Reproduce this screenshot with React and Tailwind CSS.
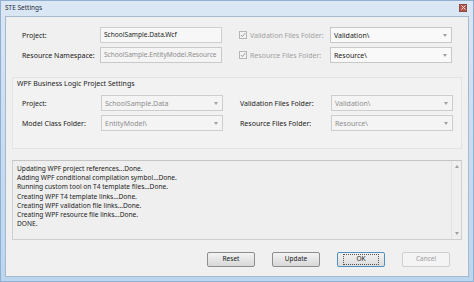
import React from "react";

const font = { fontFamily: '"Noto Sans", "Open Sans", sans-serif' };

function TextBox({ value, disabled }) {
  return (
    <div
      className={
        "w-[122px] h-[16px] flex items-center px-[3px] border text-[6.6px] leading-none whitespace-nowrap overflow-hidden " +
        (disabled
          ? "bg-[#f4f4f4] border-[#c9c9c9] text-[#8d8d8d]"
          : "bg-[#f7f7f7] border-[#cfcfcf] text-[#1a1a1a]")
      }
    >
      {value}
    </div>
  );
}

function Combo({ value, disabled }) {
  return (
    <div
      className={
        "w-[122px] h-[16px] flex items-center justify-between pl-[3px] pr-[4px] border text-[7px] leading-none " +
        (disabled
          ? "bg-[#f4f4f4] border-[#cdcdcd] text-[#8d8d8d]"
          : "bg-[#f9f9f9] border-[#c8c8c8] text-[#1a1a1a]")
      }
    >
      <span>{value}</span>
      <svg width="4" height="3" viewBox="0 0 4 3">
        <path d="M0 0 L4 0 L2 3 Z" fill="#a0a0a0" />
      </svg>
    </div>
  );
}

function Check() {
  return (
    <div className="w-[8px] h-[8px] border border-[#b5b5b5] bg-[#f3f3f3] flex items-center justify-center">
      <svg width="6" height="6" viewBox="0 0 6 6">
        <path d="M0.8 3 L2.4 4.6 L5.2 1.2" stroke="#9a9a9a" strokeWidth="1" fill="none" />
      </svg>
    </div>
  );
}

function Button({ children, kind }) {
  let cls =
    "w-[48px] h-[15px] flex items-center justify-center text-[6.5px] leading-none border rounded-[2px] ";
  if (kind === "ok")
    cls += "border-[#4f8fc4] bg-gradient-to-b from-[#f2f2f2] to-[#dcdcdc] text-[#1a1a1a]";
  else if (kind === "disabled")
    cls += "border-[#cfcfcf] bg-[#f4f4f4] text-[#9a9a9a]";
  else cls += "border-[#8e8e8e] bg-gradient-to-b from-[#f3f3f3] to-[#d8d8d8] text-[#1a1a1a]";
  return (
    <div className={cls}>
      {kind === "ok" ? (
        <span className="px-[12px] py-[1px] border border-dotted border-[#555]">{children}</span>
      ) : (
        children
      )}
    </div>
  );
}

export default function App() {
  const log = [
    "Updating WPF project references...Done.",
    "Adding WPF conditional compilation symbol...Done.",
    "Running custom tool on T4 template files...Done.",
    "Creating WPF T4 template links...Done.",
    "Creating WPF validation file links...Done.",
    "Creating WPF resource file links...Done.",
    "DONE.",
  ];
  return (
    <div
      className="w-[474px] h-[282px] flex flex-col bg-gradient-to-b from-[#dbe7f4] via-[#c9dcf1] to-[#bcd6f0] border border-[#8fb0d3] overflow-hidden"
      style={font}
    >
      {/* title bar */}
      <div className="h-[15px] flex items-center justify-between pl-[4px] pr-[6px] shrink-0">
        <span className="text-[6.5px] text-[#1e2a3a] leading-none">STE Settings</span>
        <div className="w-[8px] h-[8px] bg-[#b9554c] border border-[#8a4a45] flex items-center justify-center mt-[-2px]">
          <svg width="5" height="5" viewBox="0 0 5 5">
            <path d="M0.5 0.5 L4.5 4.5 M4.5 0.5 L0.5 4.5" stroke="#f3e4e2" strokeWidth="1" />
          </svg>
        </div>
      </div>
      {/* client */}
      <div className="mx-[4px] mb-[4px] flex-1 bg-[#f0f0f0] border border-[#a6b9cf] flex flex-col text-[#1a1a1a]">
        {/* top section */}
        <div className="flex pl-[16px] pt-[10px]">
          <div className="flex flex-col gap-[4px]">
            <div className="flex items-center">
              <span className="w-[78px] text-[7px] leading-none">Project:</span>
              <TextBox value="SchoolSample.Data.Wcf" />
            </div>
            <div className="flex items-center">
              <span className="w-[78px] text-[7px] leading-none">Resource Namespace:</span>
              <TextBox value="SchoolSample.EntityModel.Resource" disabled />
            </div>
          </div>
          <div className="flex flex-col gap-[4px] ml-[17px]">
            <div className="flex items-center">
              <div className="w-[91px] flex items-center gap-[3px]">
                <Check />
                <span className="text-[7px] leading-none text-[#a0a0a0]">Validation Files Folder:</span>
              </div>
              <Combo value="Validation\" />
            </div>
            <div className="flex items-center">
              <div className="w-[91px] flex items-center gap-[3px]">
                <Check />
                <span className="text-[7px] leading-none text-[#a0a0a0]">Resource Files Folder:</span>
              </div>
              <Combo value="Resource\" />
            </div>
          </div>
        </div>

        {/* group */}
        <div className="mx-[6px] mt-[14px] h-[72px] border border-[#e3e3e3] bg-[#f2f2f2] flex flex-col">
          <div className="pl-[4px] pt-[1px] text-[7px] leading-[10px]">WPF Business Logic Project Settings</div>
          <div className="flex pl-[9px] pt-[6px]">
            <div className="flex flex-col gap-[4px]">
              <div className="flex items-center">
                <span className="w-[79px] text-[7px] leading-none">Project:</span>
                <Combo value="SchoolSample.Data" disabled />
              </div>
              <div className="flex items-center">
                <span className="w-[79px] text-[7px] leading-none">Model Class Folder:</span>
                <Combo value="EntityModel\" disabled />
              </div>
            </div>
            <div className="flex flex-col gap-[4px] ml-[17px]">
              <div className="flex items-center">
                <span className="w-[91px] text-[7px] leading-none">Validation Files Folder:</span>
                <Combo value="Validation\" disabled />
              </div>
              <div className="flex items-center">
                <span className="w-[91px] text-[7px] leading-none">Resource Files Folder:</span>
                <Combo value="Resource\" disabled />
              </div>
            </div>
          </div>
        </div>

        {/* log */}
        <div className="mx-[6px] mt-[11px] h-[80px] border border-[#cfcfcf] border-t-[#c4c4c4] bg-[#efefef] flex">
          <div className="flex-1 pl-[4px] pt-[3px] text-[6.6px] leading-[9.2px]">
            {log.map((l) => (
              <div key={l}>{l}</div>
            ))}
          </div>
          <div className="w-[10px] border-l border-[#e4e4e4] flex flex-col items-center justify-between py-[4px]">
            <svg width="4" height="3" viewBox="0 0 4 3">
              <path d="M0 3 L4 3 L2 0 Z" fill="#a0a0a0" />
            </svg>
            <svg width="4" height="3" viewBox="0 0 4 3">
              <path d="M0 0 L4 0 L2 3 Z" fill="#a0a0a0" />
            </svg>
          </div>
        </div>

        {/* buttons */}
        <div className="flex justify-end gap-[17px] pr-[18px] mt-[12px]">
          <Button>Reset</Button>
          <Button>Update</Button>
          <Button kind="ok">OK</Button>
          <Button kind="disabled">Cancel</Button>
        </div>
      </div>
    </div>
  );
}
